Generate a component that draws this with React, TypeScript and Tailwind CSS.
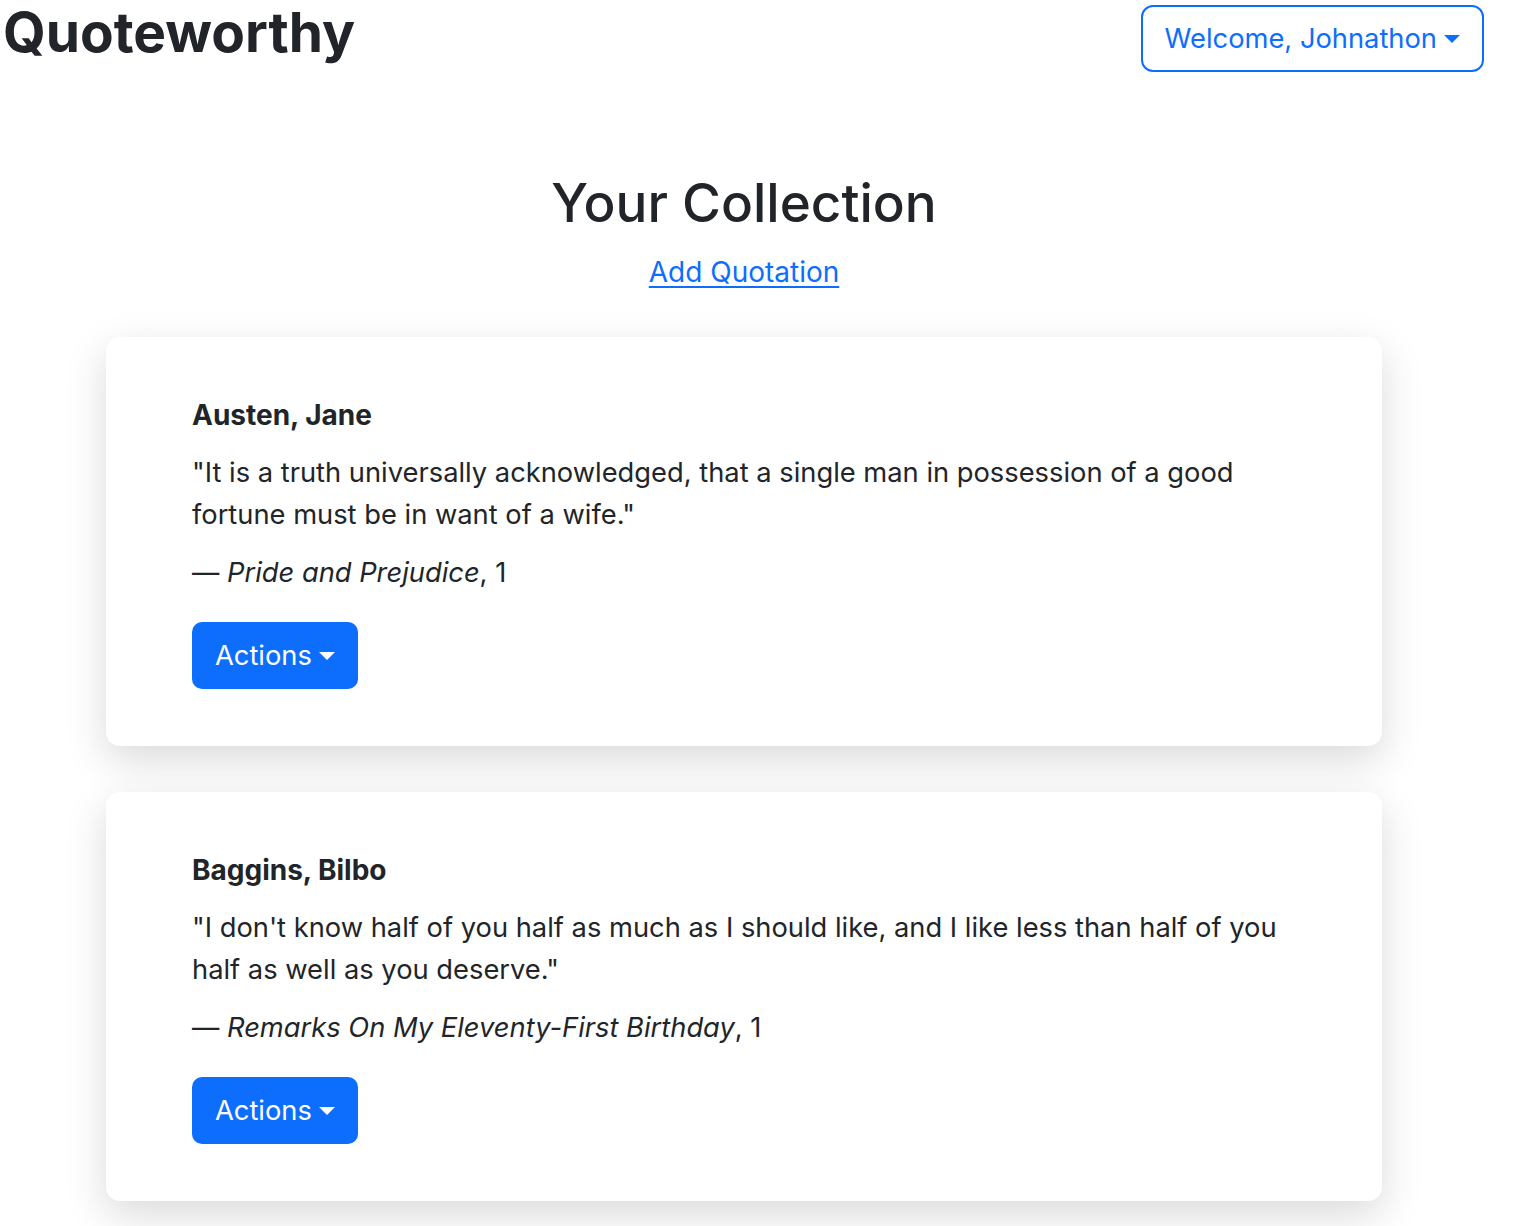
type Quote = {
  author: string;
  text: string;
  source: string;
  page: number;
};

const quotes: Quote[] = [
  {
    author: "Austen, Jane",
    text: "\"It is a truth universally acknowledged, that a single man in possession of a good fortune must be in want of a wife.\"",
    source: "Pride and Prejudice",
    page: 1,
  },
  {
    author: "Baggins, Bilbo",
    text: "\"I don't know half of you half as much as I should like, and I like less than half of you half as well as you deserve.\"",
    source: "Remarks On My Eleventy-First Birthday",
    page: 1,
  },
];

function Caret() {
  return (
    <span className="ml-[7px] inline-block h-0 w-0 border-x-[8px] border-t-[8px] border-x-transparent border-t-current align-[0.2em]" />
  );
}

function QuoteCard({ quote }: { quote: Quote }) {
  return (
    <div className="rounded-[14px] bg-white px-[86px] py-[57px] shadow-[0_14px_42px_rgba(0,0,0,0.15)]">
      <h5 className="mb-[16px] text-[28px] font-bold leading-[42px] text-[#212529]">
        {quote.author}
      </h5>
      <p className="mb-[16px] text-[27.3px] leading-[42px] text-[#212529]">
        {quote.text}
      </p>
      <p className="mb-[28px] text-[27.3px] leading-[42px] text-[#212529]">
        — <em>{quote.source}</em>, {quote.page}
      </p>
      <button className="flex h-[67px] items-center rounded-[10px] bg-[#0d6efd] px-[23px] text-[27.3px] leading-[42px] text-white">
        Actions
        <Caret />
      </button>
    </div>
  );
}

export default function App() {
  return (
    <div className="min-h-screen bg-white font-['Inter',sans-serif] text-[#212529]">
      <div className="w-[1488px]">
        <header className="flex items-start justify-between pr-[4px] pt-[5px]">
          <h1 className="-mt-[5px] pl-[3px] text-[55px] font-bold leading-[64px] text-[#212529]">
            Quoteworthy
          </h1>
          <button className="flex h-[67px] items-center rounded-[12px] border-2 border-[#0d6efd] bg-white px-[22px] text-[27.3px] leading-[42px] text-[#0d6efd]">
            Welcome, Johnathon
            <Caret />
          </button>
        </header>

        <div className="mt-[95px] flex flex-col items-center">
          <h2 className="text-[53px] font-medium leading-[72px] text-[#212529]">
            Your Collection
          </h2>
          <a
            href="#"
            className="mt-[12px] text-[28px] leading-[42px] text-[#0d6efd] underline underline-offset-[4px]"
          >
            Add Quotation
          </a>
        </div>

        <div className="mx-[106px] mt-[44px] flex flex-col gap-[46px] pb-[40px]">
          {quotes.map((q) => (
            <QuoteCard key={q.author} quote={q} />
          ))}
        </div>
      </div>
    </div>
  );
}
